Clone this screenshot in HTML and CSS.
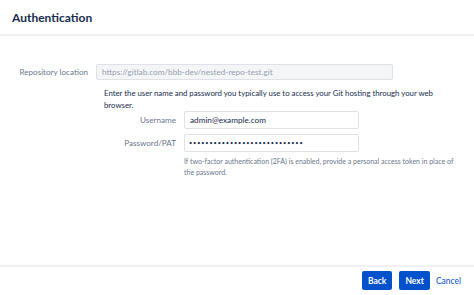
FILE: index.html
```html
<!DOCTYPE html>
<html>
<head>
<meta charset="utf-8">
<link rel="stylesheet" href="styles.css">
</head>
<body>
<div class="dialog">
  <header class="head"><h1 class="title">Authentication</h1></header>
  <main class="body">
    <div class="row">
      <label class="lbl lbl-wide">Repository location</label>
      <div class="field field-ro">https://gitlab.com/bbb-dev/nested-repo-test.git</div>
    </div>
    <p class="desc">Enter the user name and password you typically use to access your Git hosting through your web browser.</p>
    <div class="row row-user">
      <label class="lbl lbl-narrow">Username</label>
      <div class="field field-in">admin@example.com</div>
    </div>
    <div class="row row-pass">
      <label class="lbl lbl-narrow">Password/PAT</label>
      <div class="field field-in pw">••••••••••••••••••••••••••••</div>
    </div>
    <p class="hint">If two-factor authentication (2FA) is enabled, provide a personal access token in place of the password.</p>
  </main>
  <footer class="foot">
    <button class="btn primary">Back</button>
    <button class="btn primary">Next</button>
    <button class="btn link">Cancel</button>
  </footer>
</div>
</body>
</html>
```
FILE: styles.css
```css
html, body { margin: 0; padding: 0; background: #fff; }
body { font-family: "Lato", "Open Sans", sans-serif; color: #172b4d; width: 474px; height: 295px; overflow: hidden; }
.dialog { display: flex; flex-direction: column; height: 295px; }
.head { height: 36px; border-bottom: 2px solid #f0f1f3; box-sizing: border-box; display: flex; align-items: center; padding-left: 12px; }
.title { margin: 0; font-size: 12px; font-weight: 700; color: #172b4d; }
.body { flex: 1; padding-top: 28px; }
.row { display: flex; align-items: center; }
.lbl { font-size: 8.1px; color: #6b778c; text-align: right; box-sizing: border-box; }
.lbl-wide { width: 96px; padding-right: 8px; }
.lbl-narrow { width: 184px; padding-right: 8px; }
.field { box-sizing: border-box; font-size: 8.2px; display: flex; align-items: center; padding-left: 5px; border-radius: 2px; }
.field-ro { width: 297px; height: 16px; background: #f4f5f7; border: 1px solid #dfe1e6; color: #97a0af; }
.field-in { width: 175px; height: 18px; background: #fff; border: 1px solid #dfe1e6; color: #172b4d; }
.pw { font-size: 5.5px; letter-spacing: 0.9px; padding-left: 4px; }
.desc { margin: 8px 0 0 104px; width: 345px; font-size: 7.8px; line-height: 11.5px; color: #172b4d; }
.row-user { margin-top: 0; }
.row-pass { margin-top: 5px; }
.hint { margin: 4px 0 0 184px; width: 272px; font-size: 7px; line-height: 11px; color: #6b778c; }
.foot { height: 30px; box-sizing: border-box; border-top: 2px solid #f0f1f3; display: flex; align-items: flex-start; justify-content: flex-end; padding: 4px 12px 0 0; gap: 7px; }
.btn { font-family: inherit; font-size: 8.5px; font-weight: 700; height: 19px; border: none; border-radius: 2px; padding: 0 6px; cursor: pointer; }
.primary { background: #0052cc; color: #fff; }
.link { background: transparent; color: #0052cc; font-weight: 400; padding: 0 1px; margin-left: -2px; }
```
